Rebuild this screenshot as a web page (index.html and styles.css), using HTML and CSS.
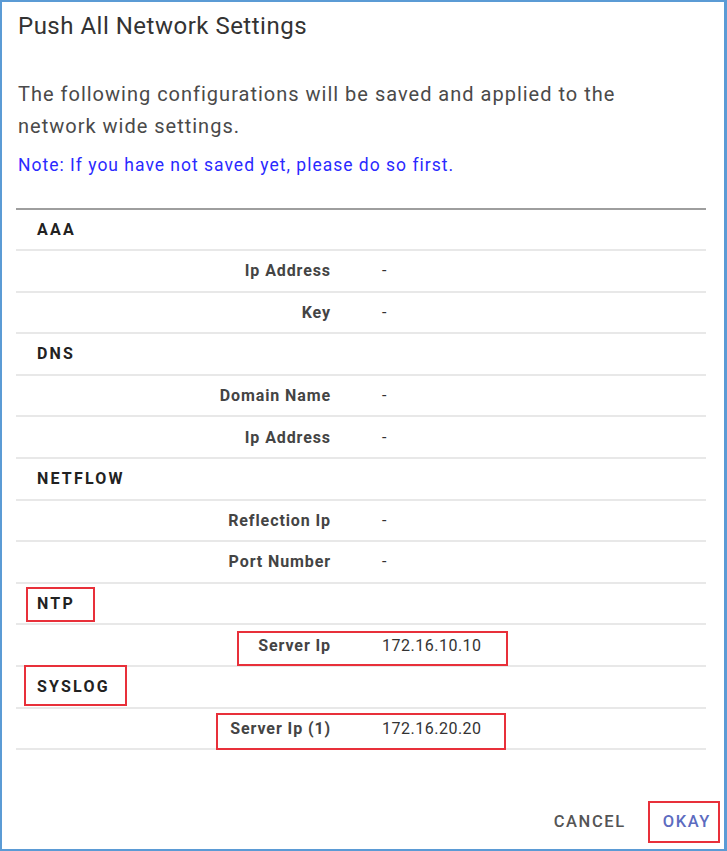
FILE: index.html
```html
<!DOCTYPE html>
<html>
<head>
<meta charset="utf-8">
<link rel="stylesheet" href="styles.css">
</head>
<body>
<div class="dialog">
  <h1 class="title">Push All Network Settings</h1>
  <p class="desc">The following configurations will be saved and applied to the network wide settings.</p>
  <p class="note">Note: If you have not saved yet, please do so first.</p>
  <div class="table">
    <div class="row section"><span class="sec">AAA</span></div>
    <div class="row item"><span class="label">Ip Address</span><span class="value">-</span></div>
    <div class="row item"><span class="label">Key</span><span class="value">-</span></div>
    <div class="row section"><span class="sec">DNS</span></div>
    <div class="row item"><span class="label">Domain Name</span><span class="value">-</span></div>
    <div class="row item"><span class="label">Ip Address</span><span class="value">-</span></div>
    <div class="row section"><span class="sec">NETFLOW</span></div>
    <div class="row item"><span class="label">Reflection Ip</span><span class="value">-</span></div>
    <div class="row item"><span class="label">Port Number</span><span class="value">-</span></div>
    <div class="row section"><span class="sec">NTP</span></div>
    <div class="row item"><span class="label">Server Ip</span><span class="value">172.16.10.10</span></div>
    <div class="row section"><span class="sec">SYSLOG</span></div>
    <div class="row item"><span class="label">Server Ip (1)</span><span class="value">172.16.20.20</span></div>
  </div>
  <div class="actions">
    <button class="btn cancel">CANCEL</button>
    <button class="btn okay">OKAY</button>
  </div>
  <div class="mark m-ntp"></div>
  <div class="mark m-ntp-ip"></div>
  <div class="mark m-syslog"></div>
  <div class="mark m-syslog-ip"></div>
  <div class="mark m-okay"></div>
</div>
</body>
</html>
```

FILE: styles.css
```css
html, body {
  margin: 0;
  padding: 0;
  background: #ffffff;
}
.dialog {
  position: relative;
  box-sizing: border-box;
  width: 727px;
  height: 851px;
  border: 2px solid #5b9bd5;
  border-right-width: 3px;
  background: #ffffff;
  font-family: Roboto, "Liberation Sans", Arial, sans-serif;
  display: flex;
  flex-direction: column;
  padding: 0 18px 0 14px;
}
.title {
  margin: 7px 0 0 2px;
  font-size: 24px;
  line-height: 34px;
  font-weight: 400;
  letter-spacing: 0.5px;
  color: #333333;
}
.desc {
  margin: 35px 0 0 2px;
  font-size: 20px;
  line-height: 32px;
  letter-spacing: 1px;
  color: #4a4a4a;
  padding-right: 80px;
}
.note {
  margin: 11px 0 0 2px;
  font-size: 17.5px;
  line-height: 24px;
  letter-spacing: 1px;
  color: #2a2aff;
}
.table {
  margin-top: 31px;
  border-top: 2px solid #9e9e9e;
  display: flex;
  flex-direction: column;
}
.row {
  box-sizing: border-box;
  height: 41.6px;
  border-bottom: 2px solid #e8e8e8;
  display: flex;
  align-items: center;
  font-size: 16px;
  color: #333333;
}
.row:first-child {
  height: 41px;
}
.sec {
  padding-left: 21px;
  font-weight: 700;
  letter-spacing: 2.2px;
  color: #222222;
}
.label {
  width: 315px;
  text-align: right;
  font-weight: 700;
  letter-spacing: 0.9px;
  color: #444444;
}
.value {
  margin-left: 51px;
  color: #333333;
  letter-spacing: 0.5px;
}
.actions {
  margin-top: auto;
  margin-bottom: 8px;
  display: flex;
  justify-content: flex-end;
  gap: 21px;
  margin-right: -13px;
}
.btn {
  border: none;
  background: transparent;
  font-family: Roboto, "Liberation Sans", Arial, sans-serif;
  font-size: 16.5px;
  font-weight: 500;
  letter-spacing: 1.6px;
  padding: 8px 8px;
  line-height: 22px;
}
.cancel { color: #555555; }
.okay { color: #5c6bc0; }
.mark {
  position: absolute;
  border: 2px solid #e8303a;
  box-sizing: border-box;
}
.m-ntp { left: 24px; top: 585px; width: 69px; height: 35px; }
.m-ntp-ip { left: 235px; top: 629px; width: 271px; height: 35px; }
.m-syslog { left: 22px; top: 663px; width: 103px; height: 41px; }
.m-syslog-ip { left: 214px; top: 711px; width: 290px; height: 37px; }
.m-okay { left: 646px; top: 799px; width: 72px; height: 42px; }
```
